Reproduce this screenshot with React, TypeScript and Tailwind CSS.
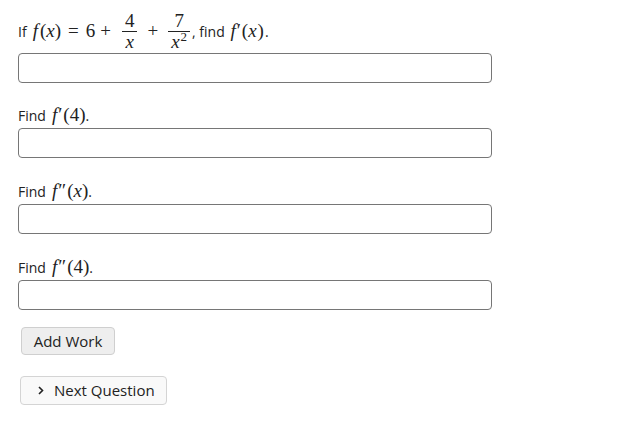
import type { ReactNode } from 'react';

function M({ children, className = '' }: { children: ReactNode; className?: string }) {
  return (
    <span className={`font-['Liberation_Serif',serif] text-[19px] leading-[22px] ${className}`}>
      {children}
    </span>
  );
}

function V({ children }: { children: ReactNode }) {
  return <span className="italic">{children}</span>;
}

function Frac({ num, den }: { num: ReactNode; den: ReactNode }) {
  return (
    <span className="mx-[6px] inline-flex flex-col items-center font-['Liberation_Serif',serif] text-[19px] leading-[18px]">
      <span className="px-[3px] pb-[1px]">{num}</span>
      <span className="w-full border-t border-[#222]" />
      <span className="px-[3px] pt-[1px]">{den}</span>
    </span>
  );
}

function Label({ children, className = '' }: { children: ReactNode; className?: string }) {
  return <div className={`flex h-[20px] items-center ${className}`}>{children}</div>;
}

function Answer({ className = '' }: { className?: string }) {
  return (
    <input
      type="text"
      className={`block h-[30px] w-[474px] rounded-[4px] border border-[#767676] bg-white ${className}`}
    />
  );
}

export default function App() {
  return (
    <div className="min-h-[424px] w-[622px] bg-white pl-[18px] font-['Open_Sans',sans-serif] text-[14px] text-[#222]">
      <div className="box-content flex h-[44px] items-center pt-[9px]">
        <span className="mr-[6px]">If</span>
        <M>
          <V>f</V>
          <span className="ml-[2px]">(</span>
          <V>x</V>)
        </M>
        <M className="mx-[7px]">=</M>
        <M>6</M>
        <M className="mx-[5px]">+</M>
        <Frac num="4" den={<V>x</V>} />
        <M className="mx-[4px]">+</M>
        <Frac
          num="7"
          den={
            <span>
              <V>x</V>
              <sup className="ml-[1px] text-[13px]">2</sup>
            </span>
          }
        />
        <span className="-ml-[4px]">, find&nbsp;</span>
        <M className="ml-[2px]">
          <V>f</V>
          <span className="ml-[1px]">′</span>
          <span className="ml-[1px]">(</span>
          <V>x</V>
          <span className="ml-[1px]">)</span>
        </M>
        <span className="ml-[1px]">.</span>
      </div>
      <Answer />

      <Label className="mt-[22px]">
        <span className="mr-[6px]">Find</span>
        <M>
          <V>f</V>
          <span className="ml-[1px]">′</span>
          <span className="ml-[1px]">(4)</span>
        </M>
        <span>.</span>
      </Label>
      <Answer className="mt-[3px]" />

      <Label className="mt-[23px]">
        <span className="mr-[6px]">Find</span>
        <M>
          <V>f</V>
          <span className="ml-[1px]">″</span>
          <span className="ml-[1px]">(</span>
          <V>x</V>)
        </M>
        <span>.</span>
      </Label>
      <Answer className="mt-[3px]" />

      <Label className="mt-[23px]">
        <span className="mr-[6px]">Find</span>
        <M>
          <V>f</V>
          <span className="ml-[1px]">″</span>
          <span className="ml-[1px]">(4)</span>
        </M>
        <span>.</span>
      </Label>
      <Answer className="mt-[3px]" />

      <button
        type="button"
        className="ml-[3px] mt-[17px] block h-[28px] w-[94px] rounded-[4px] border border-[#cfcfcf] bg-[#eeeeee] text-[15px] text-[#222]"
      >
        Add Work
      </button>

      <button
        type="button"
        className="ml-[2px] mt-[21px] flex h-[29px] w-[147px] items-center rounded-[4px] border border-[#d4d4d4] bg-[#f9f9f9] pl-[17px] text-[15px] text-[#222]"
      >
        <svg width="6" height="9" viewBox="0 0 6 9" className="mr-[10px]">
          <path d="M1 1l3.5 3.5L1 8" fill="none" stroke="#222" strokeWidth="1.6" />
        </svg>
        Next Question
      </button>
    </div>
  );
}
